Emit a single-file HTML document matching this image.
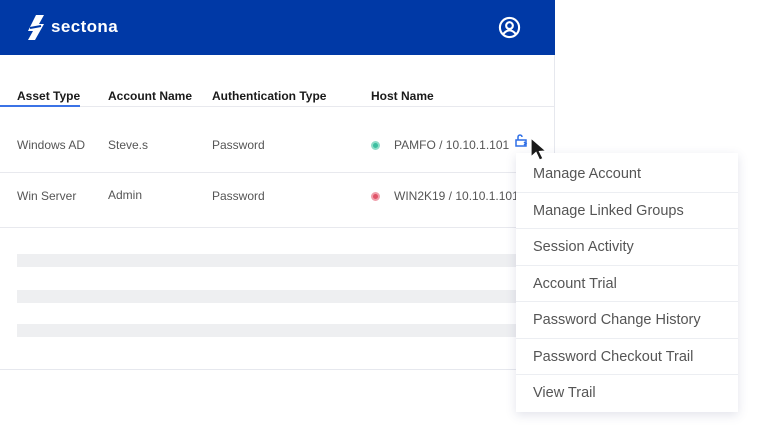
<!DOCTYPE html>
<html><head><style>
body{margin:0;width:768px;height:443px;background:#fff;position:relative;overflow:hidden;font-family:"Liberation Sans",sans-serif;}
.card{position:absolute;left:0;top:0;width:554px;height:369px;border-right:1px solid #e6e8ee;border-bottom:1px solid #e6e8ee;}
.hdr{position:absolute;left:0;top:0;width:555px;height:55px;background:#0039a6;}
.logo{position:absolute;left:51px;top:17px;color:#fff;font-size:17px;font-weight:bold;letter-spacing:0.4px}
.t{position:absolute;font-size:12px;color:#222;}
.th{font-weight:bold;top:89px;color:#1a1a1a}
.td{color:#555}
.line{position:absolute;height:1px;background:#e8e9ee;left:0;width:554px}
.bar{position:absolute;left:17px;width:499px;height:13px;background:#eeeff1}
.dd{position:absolute;left:516px;top:153px;width:222px;height:259px;background:#fff;box-shadow:0 3px 10px rgba(60,70,120,.15);padding-top:3px;box-sizing:border-box}
.it{height:36.5px;border-bottom:1px solid #eceef2;font-size:14.5px;color:#555;line-height:36px;padding-left:17px;box-sizing:border-box}
.it:last-child{border-bottom:none}
.dot{position:absolute;width:5px;height:5px;border-radius:50%;border:2px solid}
</style></head><body>
<div class="card"></div>
<div class="hdr">
<svg style="position:absolute;left:27px;top:15px" width="18" height="25" viewBox="0 0 18 25"><path d="M9 0 L17 0 L12 9 L17 9 L8 25 L1 25 L6 16 L1 16 Z" fill="#fff"/><path d="M3 13 L14 11" stroke="#0039a6" stroke-width="2"/></svg>
<div class="logo">sectona</div>
<svg style="position:absolute;left:498px;top:16px" width="23" height="23" viewBox="0 0 24 24" fill="none" stroke="#fff" stroke-width="2.2"><circle cx="12" cy="12" r="10"/><circle cx="12" cy="10" r="3.5"/><path d="M5.5 19c2-3 4-4 6.5-4s4.5 1 6.5 4"/></svg>
</div>
<div class="t th" style="left:17px">Asset Type</div>
<div class="t th" style="left:108px">Account Name</div>
<div class="t th" style="left:212px">Authentication Type</div>
<div class="t th" style="left:371px">Host Name</div>
<div class="line" style="top:106px"></div>
<div style="position:absolute;left:0;top:105px;width:80px;height:2px;background:#3b73e6"></div>
<div class="t td" style="left:17px;top:138px">Windows AD</div>
<div class="t td" style="left:108px;top:138px">Steve.s</div>
<div class="t td" style="left:212px;top:138px">Password</div>
<div class="dot" style="left:371px;top:141px;border-color:#8fdcc8;background:#3cbfa0"></div>
<div class="t td" style="left:394px;top:138px">PAMFO / 10.10.1.101</div>
<div class="line" style="top:172px"></div>
<div class="t td" style="left:17px;top:189px">Win Server</div>
<div class="t td" style="left:108px;top:188px">Admin</div>
<div class="t td" style="left:212px;top:189px">Password</div>
<div class="dot" style="left:371px;top:192px;border-color:#f0a0ac;background:#e05468"></div>
<div class="t td" style="left:394px;top:189px">WIN2K19 / 10.10.1.101</div>
<div class="line" style="top:227px"></div>
<div class="bar" style="top:254px"></div>
<div class="bar" style="top:290px"></div>
<div class="bar" style="top:324px"></div>
<svg style="position:absolute;left:515px;top:134px" width="14" height="13" viewBox="0 0 14 13" fill="none" stroke="#2f6fe6" stroke-width="1.5"><path d="M1 6v6h10V6H1zM3 6V3a2 2 0 0 1 4 0"/><path d="M9 8l2 1.5L9 11"/></svg>
<div class="dd">
<div class="it">Manage Account</div>
<div class="it">Manage Linked Groups</div>
<div class="it">Session Activity</div>
<div class="it">Account Trial</div>
<div class="it">Password Change History</div>
<div class="it">Password Checkout Trail</div>
<div class="it" style="height:36px">View Trail</div>
</div>
<svg style="position:absolute;left:529px;top:137px" width="22" height="26" viewBox="0 0 22 26"><path d="M2 1 L2 20 L7 15.5 L10.5 23 L14 21.5 L10.5 14.5 L17 14 Z" fill="#1a1a1a" stroke="#fff" stroke-width="1.2"/></svg>
</body></html>
